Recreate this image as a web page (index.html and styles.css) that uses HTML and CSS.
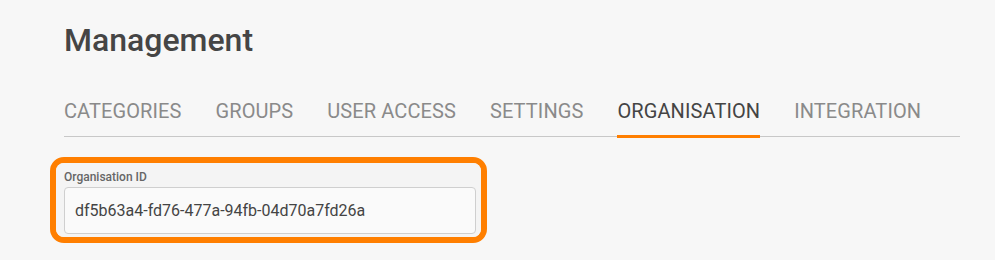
FILE: index.html
```html
<!DOCTYPE html>
<html>
<head>
  <link rel="stylesheet" href="styles.css">
</head>
<body>
  <div class="content">
    <h1>Management</h1>
    <div class="tabs">
      <span class="tab">Categories</span>
      <span class="tab">Groups</span>
      <span class="tab">User Access</span>
      <span class="tab">Settings</span>
      <span class="tab tab-active">Organisation</span>
      <span class="tab">Integration</span>
    </div>
    <div class="highlight">
      <div class="field">
        <label for="org-id">Organisation ID</label>
        <input type="text" id="org-id" class="input" value="df5b63a4-fd76-477a-94fb-04d70a7fd26a" readonly>
      </div>
    </div>
  </div>
</body>
</html>
```

FILE: styles.css
```css
body {
  margin: 0;
  background-color: #f7f7f7;
  font-family: Roboto, Arial, sans-serif;
  color: #444;
}

.content {
  padding: 0 35px 0 64px;
}

h1 {
  margin: 0;
  padding-top: 20px;
  height: 40px;
  font-size: 32px;
  font-weight: 500;
  line-height: 40px;
  color: #454545;
}

.tabs {
  display: flex;
  gap: 34px;
  margin-top: 39px;
  border-bottom: 1px solid #c8c8c8;
}

.tab {
  text-transform: uppercase;
  font-size: 20px;
  letter-spacing: 0.1px;
  line-height: 24px;
  padding-bottom: 12px;
  color: #8a8a8a;
  border-bottom: 3px solid transparent;
  margin-bottom: -2px;
}

.tab-active {
  color: #444;
  border-bottom-color: #ff7f00;
}

.highlight {
  width: 425px;
  margin: 20px 0 0 -14px;
  border: 6px solid #ff7f00;
  border-radius: 14px;
}

.field {
  padding: 6px 2px 3px 8px;
  border-radius: 8px;
  background-color: #f4f4f4;
}

.field label {
  display: block;
  font-size: 12px;
  font-weight: 500;
  line-height: 16px;
  color: #666;
  margin-bottom: 2px;
}

.input {
  box-sizing: border-box;
  width: 412px;
  height: 47px;
  padding: 0 10px;
  border: 1px solid #cfcfcf;
  border-radius: 4px;
  background-color: #fafafa;
  font-family: Roboto, Arial, sans-serif;
  font-size: 16px;
  color: #444;
  outline: none;
}
```
